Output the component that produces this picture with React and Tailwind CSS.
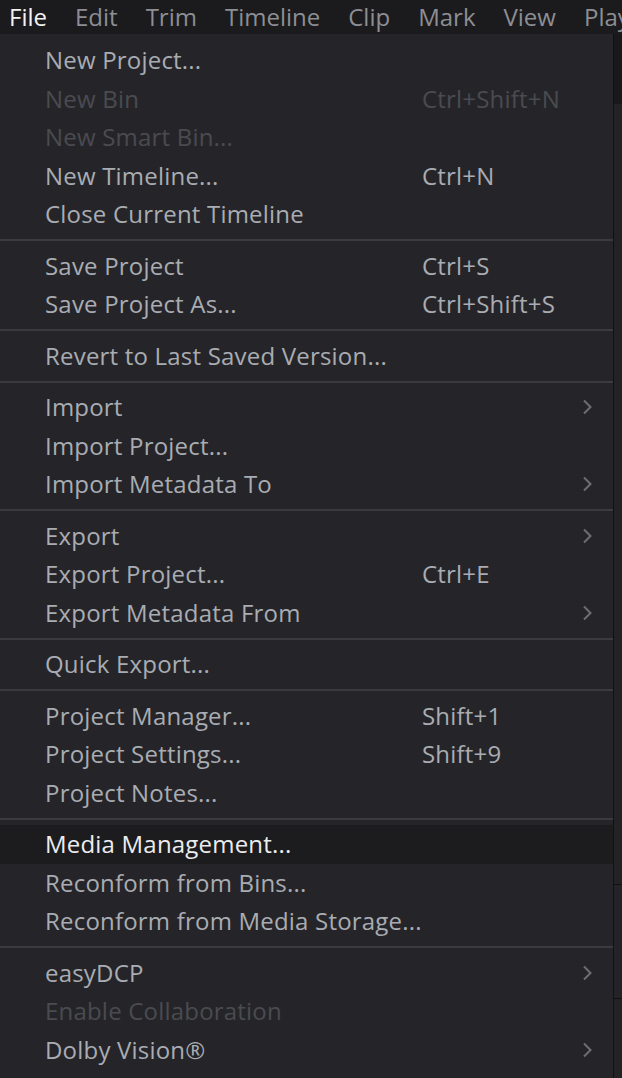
const menuBar = ['File', 'Edit', 'Trim', 'Timeline', 'Clip', 'Mark', 'View', 'Playback']

const sections = [
  [
    { label: 'New Project...' },
    { label: 'New Bin', shortcut: 'Ctrl+Shift+N', disabled: true },
    { label: 'New Smart Bin...', disabled: true },
    { label: 'New Timeline...', shortcut: 'Ctrl+N' },
    { label: 'Close Current Timeline' },
  ],
  [
    { label: 'Save Project', shortcut: 'Ctrl+S' },
    { label: 'Save Project As...', shortcut: 'Ctrl+Shift+S' },
  ],
  [{ label: 'Revert to Last Saved Version...' }],
  [
    { label: 'Import', submenu: true },
    { label: 'Import Project...' },
    { label: 'Import Metadata To', submenu: true },
  ],
  [
    { label: 'Export', submenu: true },
    { label: 'Export Project...', shortcut: 'Ctrl+E' },
    { label: 'Export Metadata From', submenu: true },
  ],
  [{ label: 'Quick Export...' }],
  [
    { label: 'Project Manager...', shortcut: 'Shift+1' },
    { label: 'Project Settings...', shortcut: 'Shift+9' },
    { label: 'Project Notes...' },
  ],
  [
    { label: 'Media Management...', active: true },
    { label: 'Reconform from Bins...' },
    { label: 'Reconform from Media Storage...' },
  ],
  [
    { label: 'easyDCP', submenu: true },
    { label: 'Enable Collaboration', disabled: true },
    { label: 'Dolby Vision®', submenu: true },
  ],
]

function Chevron() {
  return (
    <svg width="11" height="18" viewBox="0 0 11 18" className="text-[#6d6e73] shrink-0">
      <path d="M2 2.5 L8.5 9 L2 15.5" fill="none" stroke="currentColor" strokeWidth="2" />
    </svg>
  )
}

function MenuItem({ item }) {
  const color = item.disabled
    ? 'text-[#4a4b50]'
    : item.active
      ? 'text-[#ececef]'
      : 'text-[#a9acb2]'
  return (
    <div
      className={`h-[38.5px] flex items-center pl-[45px] pr-[20px] tracking-[0.2px] ${color} ${item.active ? 'bg-[#1c1c1e]' : ''}`}
    >
      <span className="w-[377px] shrink-0 whitespace-nowrap">{item.label}</span>
      <span className="flex-1 whitespace-nowrap">{item.shortcut}</span>
      {item.submenu && <Chevron />}
    </div>
  )
}

export default function App() {
  return (
    <div
      className="w-[622px] h-[1078px] overflow-hidden bg-[#1b1b1d] flex flex-col text-[24px] leading-none"
      style={{ fontFamily: '"Open Sans", "Noto Sans", sans-serif' }}
    >
      <div className="h-[34px] shrink-0 flex items-center pl-[9px] gap-[28px] text-[#8c8e94] whitespace-nowrap overflow-hidden">
        {menuBar.map((m, i) => (
          <span key={m} className={i === 0 ? 'text-[#f2f2f2]' : ''}>
            {m}
          </span>
        ))}
      </div>

      <div className="flex flex-1 min-h-0">
        <div className="w-[613px] shrink-0 bg-[#252529] pt-[7px]">
          {sections.map((section, si) => (
            <div key={si}>
              {si > 0 && (
                <div className="py-[5.5px]">
                  <div className="h-[2px] bg-[#3a3b40]" />
                </div>
              )}
              {section.map(item => (
                <MenuItem key={item.label} item={item} />
              ))}
            </div>
          ))}
        </div>

        <div className="flex-1 flex flex-col border-l border-[#111113]">
          <div className="h-[70px] bg-[#19191b]" />
          <div className="h-[781px] bg-[#232326] border-b border-[#111113]" />
          <div className="h-[114px] bg-[#242428] border-b border-[#111113]" />
          <div className="flex-1 bg-[#232326]" />
        </div>
      </div>
    </div>
  )
}
